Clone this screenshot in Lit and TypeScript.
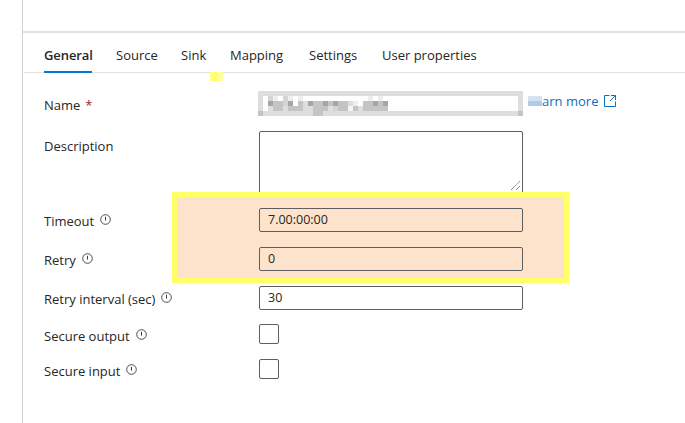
import { LitElement, html, css } from "lit";
import { customElement } from "lit/decorators.js";

const info = html`<svg class="info" width="11" height="11" viewBox="0 0 11 11"><circle cx="5.5" cy="5.5" r="4.8" fill="none" stroke="#3a3a3a" stroke-width="0.9"/><path d="M5.5 2.8v3.8" stroke="#3a3a3a" stroke-width="1" fill="none"/></svg>`;

const C: Record<string, string> = { w: "#ffffff", a: "#dedede", b: "#c4c4c4", c: "#a6a6a6", d: "#eeeeee", e: "#d4d4d4", f: "#f6f6f6" };
const pad = (s: string, fill: string, tail: string) => s + fill.repeat(53 - s.length - tail.length) + tail;
const ROWS = [
  pad("", "a", ""),
  pad("awedwedwdwwwwwwwwwwwwwdwd", "w", "a"),
  pad("awcbbecwbacbbcbcbbadwbbcbc", "w", "a"),
  pad("awabbabbbaabbbaebbfbabbbbb", "w", "a"),
  pad("baaaaaaaaaabbaaaaaaaaaaaa", "a", "b"),
];

@customElement("app-root")
export class AppRoot extends LitElement {
  static styles = css`
    :host { display: block; position: relative; width: 685px; height: 423px; overflow: hidden; background: #fff;
      font-family: "Open Sans", "Noto Sans", sans-serif; font-size: 13px; color: #262626; }
    .pane { margin-left: 22px; height: 423px; border-left: 1px solid #d2d2d2; box-sizing: border-box; padding-top: 31px; }
    .topline { height: 2px; background: #e1e1e1; }
    .tabs { display: grid; grid-template-columns: 48px 41px 25px 55px 49px 94px; column-gap: 24px; height: 39px; padding-left: 20px; margin-left: 1px; border-bottom: 1px solid #e1e1e1; }
    .tab { position: relative; padding-top: 13px; line-height: 18px; white-space: nowrap; }
    .tab.on { font-weight: 600; letter-spacing: -0.1px; }
    .tab.on::after { content: ""; position: absolute; left: 0; right: 0; bottom: -1px; height: 2px; background: #0078d4; }
    .form { display: grid; grid-template-columns: 215px 264px 1fr; padding-left: 21px; margin-top: 18px; }
    .label { line-height: 14px; white-space: nowrap; display: flex; gap: 6px; align-items: flex-start; padding-top: 6px; }
    .label.p8 { padding-top: 8px; }
    .label.p5 { padding-top: 5px; }
    .label.p7 { padding-top: 7px; }
    .req { color: #a4262c; margin-left: -1px; }
    .info { margin-top: 0; flex: none; }
    .mosaic { display: grid; grid-template-columns: repeat(53, 5px); grid-auto-rows: 5px; margin-left: -1px; width: 265px; }
    .mosaic i { display: block; }
    .row-name { height: 40px; box-sizing: border-box; }
    .learn { position: relative; color: #106ebe; padding-left: 5px; display: flex; align-items: flex-start; gap: 6px; line-height: 18px; margin-top: 1px; white-space: nowrap; height: 18px; }
    .learn svg { margin-top: 3px; }
    .smudge { position: absolute; left: 5px; top: 4px; width: 14px; height: 10px; background: linear-gradient(#d3e3f3 0 50%, #aecbe8 50% 100%); }
    .ta { position: relative; width: 264px; height: 64px; border: 1px solid #605e5c; border-radius: 2px; box-sizing: border-box; background: #fff; }
    .grip { position: absolute; right: 1px; bottom: 3px; }
    .input { position: relative; z-index: 2; width: 264px; height: 24px; box-sizing: border-box; border: 1px solid #605e5c; border-radius: 2px; padding-left: 8px; line-height: 22px; font-size: 12.5px; }
    .check { width: 20px; height: 20px; box-sizing: border-box; border: 1px solid #605e5c; border-radius: 2px; }
    .gap { grid-column: 1 / -1; }
    .g13 { height: 13px; }
    .g15 { height: 15px; }
    .g14 { height: 14px; }
    .hl { position: absolute; z-index: 1; left: 172px; top: 192px; width: 397px; height: 91px; box-sizing: border-box; border: 5px solid #ffff66; background: #fde3cc; }
    .speck { position: absolute; left: 210px; top: 72px; width: 13px; height: 9px; background: linear-gradient(90deg, #ffff88 0 3px, #ffff66 3px 8px, #ffffa0 8px 13px); }
  `;

  render() {
    return html`
      <div class="hl"></div>
      <div class="speck"></div>
      <div class="pane">
        <div class="topline"></div>
        <div class="tabs">
          <div class="tab on">General</div>
          <div class="tab">Source</div>
          <div class="tab">Sink</div>
          <div class="tab">Mapping</div>
          <div class="tab">Settings</div>
          <div class="tab">User properties</div>
        </div>
        <div class="form">
          <div class="label p7 row-name">Name <span class="req">*</span></div>
          <div class="mosaic">${ROWS.flatMap((r) => [...r].map((c) => html`<i style="background:${C[c]}"></i>`))}</div>
          <div class="learn"><span>Learn more</span><span class="smudge"></span>
            <svg width="12" height="12" viewBox="0 0 12 12" fill="none" stroke="#106ebe"><path d="M5.5.5H.5v11h11V6.5M7 .5h4.5V5M11.5.5 6 6"/></svg>
          </div>
          <div class="label p8">Description</div>
          <div class="ta"><svg class="grip" width="11" height="11" viewBox="0 0 11 11" stroke="#555" fill="none" stroke-dasharray="1 0.6"><path d="M1 10 10 1M6 10l4-4"/></svg></div>
          <div></div>
          <div class="gap g13"></div>
          <div class="label">Timeout ${info}</div><div class="input">7.00:00:00</div><div></div>
          <div class="gap g15"></div>
          <div class="label">Retry ${info}</div><div class="input">0</div><div></div>
          <div class="gap g15"></div>
          <div class="label">Retry interval (sec) ${info}</div><div class="input">30</div><div></div>
          <div class="gap g14"></div>
          <div class="label p5">Secure output ${info}</div><div class="check"></div><div></div>
          <div class="gap g15"></div>
          <div class="label p5">Secure input ${info}</div><div class="check"></div><div></div>
        </div>
      </div>
    `;
  }
}
